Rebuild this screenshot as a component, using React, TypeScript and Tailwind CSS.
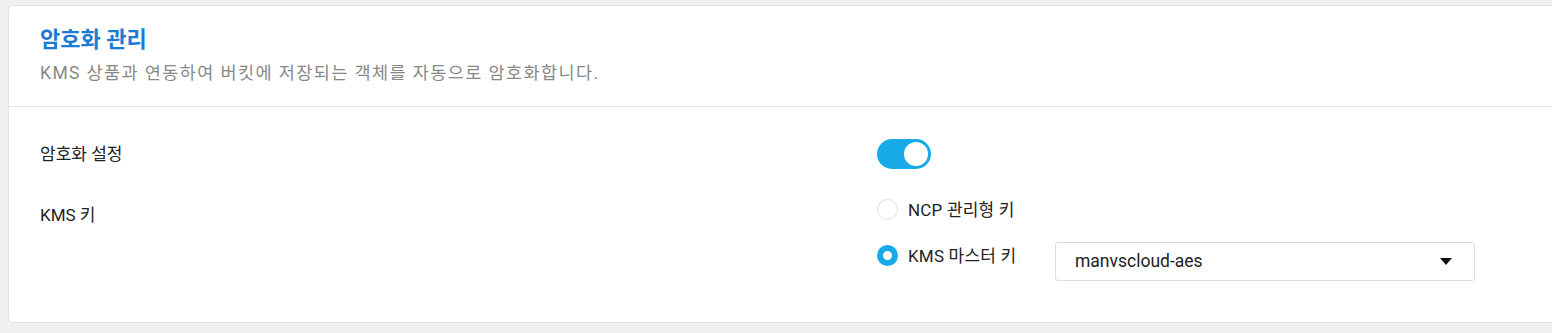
import { useState } from "react";

const font = { fontFamily: "Roboto, 'Noto Sans CJK KR', sans-serif" };

function Toggle({ on, onChange }: { on: boolean; onChange: (v: boolean) => void }) {
  return (
    <button
      type="button"
      onClick={() => onChange(!on)}
      className={`relative h-[30px] w-[54px] rounded-full transition-colors ${
        on ? "bg-[#18a9e8]" : "bg-[#cccccc]"
      }`}
    >
      <span
        className={`absolute top-[3px] h-[24px] w-[24px] rounded-full bg-white transition-all ${
          on ? "left-[27px]" : "left-[3px]"
        }`}
      />
    </button>
  );
}

function Radio({ checked, label, onClick }: { checked: boolean; label: string; onClick: () => void }) {
  return (
    <button type="button" onClick={onClick} className="flex items-center gap-[10px] text-left">
      <span
        className={`h-[21px] w-[21px] shrink-0 rounded-full bg-white ${
          checked ? "border-[6px] border-[#18a9e8]" : "border border-[#dddddd]"
        }`}
      />
      <span className="text-[17px] leading-[20px] tracking-[0.2px] text-[#222222]">{label}</span>
    </button>
  );
}

export default function App() {
  const [enabled, setEnabled] = useState(true);
  const [keyType, setKeyType] = useState<"ncp" | "kms">("kms");

  return (
    <div className="h-[333px] w-full overflow-hidden bg-[#f0f0f0] pl-[8px] pt-[5px]" style={font}>
      <div className="w-[1700px] rounded-[4px] border border-[#e3e3e3] bg-white">
        {/* Header */}
        <div className="border-b border-[#e3e3e3] px-[31px] pb-[22px] pt-[20px]">
          <h2 className="text-[22px] font-semibold leading-[28px] text-[#1a7bd5]">암호화 관리</h2>
          <p className="mt-[8px] text-[17.5px] leading-[22px] tracking-[1.4px] text-[#888888]">
            KMS 상품과 연동하여 버킷에 저장되는 객체를 자동으로 암호화합니다.
          </p>
        </div>

        {/* Body */}
        <div className="px-[31px] pb-[41px] pt-[32px]">
          <div className="flex items-center">
            <div className="w-[837px] text-[17px] leading-[24px] text-[#222222]">암호화 설정</div>
            <Toggle on={enabled} onChange={setEnabled} />
          </div>

          <div className="mt-[30px] flex items-start">
            <div className="w-[837px] pt-[4px] text-[17px] leading-[24px] text-[#222222]">KMS 키</div>
            <div className="flex flex-col gap-[22px]">
              <Radio checked={keyType === "ncp"} label="NCP 관리형 키" onClick={() => setKeyType("ncp")} />
              <div className="flex items-start">
                <div className="w-[178px] pt-[3px]">
                  <Radio checked={keyType === "kms"} label="KMS 마스터 키" onClick={() => setKeyType("kms")} />
                </div>
                <div className="flex h-[39px] w-[420px] items-center justify-between rounded-[3px] border border-[#dddddd] pl-[19px] pr-[22px]">
                  <span className="text-[17.5px] text-[#222222]">manvscloud-aes</span>
                  <svg width="12" height="8" viewBox="0 0 12 8">
                    <path d="M0 0h12L6 7z" fill="#111111" />
                  </svg>
                </div>
              </div>
            </div>
          </div>
        </div>
      </div>
    </div>
  );
}
